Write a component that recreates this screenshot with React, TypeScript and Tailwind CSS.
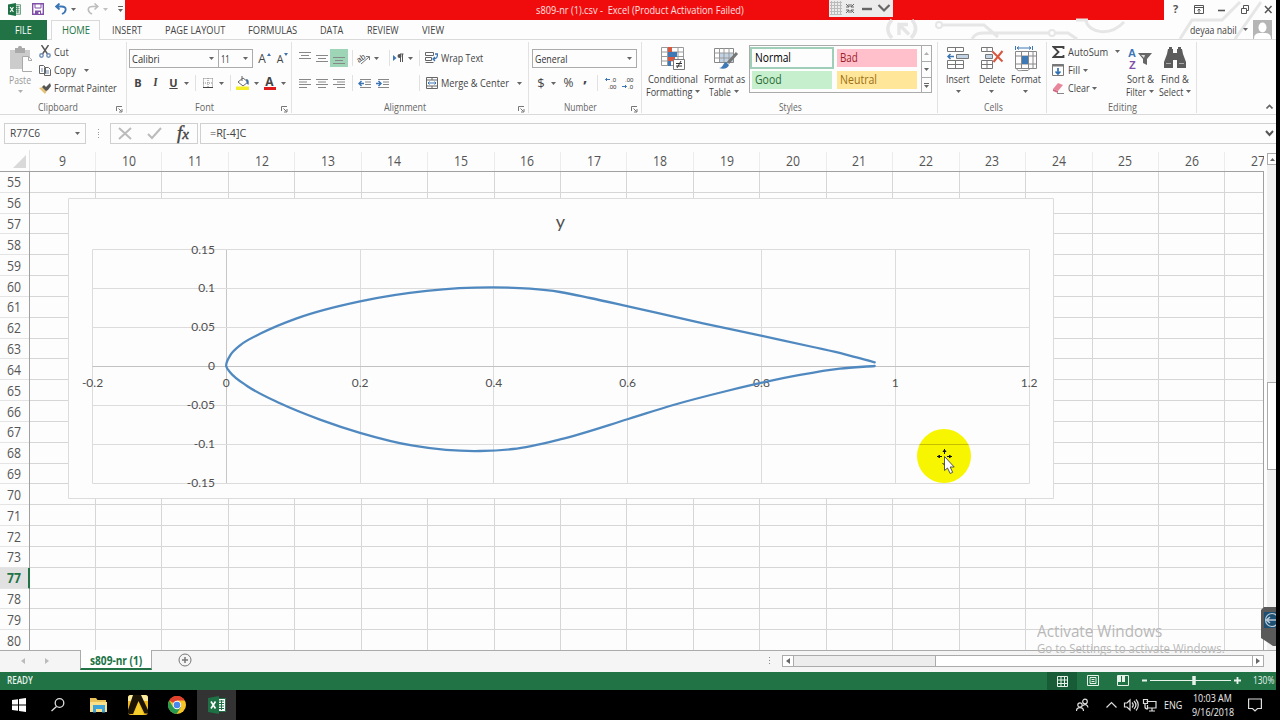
import { useLayoutEffect, useRef, useState } from "react";
import type { ReactNode } from "react";

/* Text set to a fixed width, whatever the metrics of the installed font */
function Label({ w, className = "", children }: { w: number; className?: string; children: string }) {
  const ref = useRef<HTMLSpanElement>(null);
  const [scale, setScale] = useState(1);

  useLayoutEffect(() => {
    if (ref.current) setScale(w / ref.current.offsetWidth);
  }, [w, children]);

  return (
    <span className={`block shrink-0 whitespace-pre ${className}`} style={{ width: w }}>
      <span ref={ref} className="inline-block origin-left" style={{ transform: `scaleX(${scale})` }}>
        {children}
      </span>
    </span>
  );
}

function Arrow({ className = "" }: { className?: string }) {
  return (
    <svg className={`shrink-0 ${className}`} width="5" height="3" viewBox="0 0 5 3">
      <path d="M0 0h5L2.5 3z" fill="#666" />
    </svg>
  );
}

/* A fixed-width, centred place in a toolbar row */
function Slot({ className, children }: { className: string; children?: ReactNode }) {
  return <div className={`flex h-[18px] shrink-0 items-center justify-center ${className}`}>{children}</div>;
}

function Sep() {
  return <div className="h-4 w-px shrink-0 bg-[#e1e1e1]" />;
}

function Group({ name, w, nameWidth, launcher = false, children }: { name: string; w: string; nameWidth: number; launcher?: boolean; children: ReactNode }) {
  return (
    <section className={`flex h-[71px] shrink-0 flex-col border-r border-[#e2e2e2] ${w}`}>
      <div className="flex h-[59px] items-start">{children}</div>
      <div className="flex h-3 items-center text-[#666]">
        <div className={`flex flex-1 justify-center ${launcher ? "" : "pl-3"}`}>
          <Label w={nameWidth}>{name}</Label>
        </div>
        <div className="w-[10px] pt-1">
          {launcher && (
            <svg width="7" height="7" viewBox="0 0 7 7" fill="none" stroke="#777">
              <path d="M.5 5V.5H6M2.5 2.5l3 3M6 3v3H3" />
            </svg>
          )}
        </div>
      </div>
    </section>
  );
}

function ExcelIcon({ size }: { size: number }) {
  return (
    <svg width={size} height={size} viewBox="0 0 18 18">
      <path d="M10 2.5h7.5v13H10z" fill="#fff" stroke="#217346" />
      <path d="M11 5h5M11 7.5h5M11 10h5M11 12.500h5M13.500 4v10" stroke="#217346" />
      <path d="M0 2l11-2v18L0 16z" fill="#1e7145" />
      <path d="M3 5.500l4.500 7M7.500 5.500l-4.500 7" stroke="#fff" strokeWidth="1.600" />
    </svg>
  );
}

function TitleBar() {
  return (
    <header className="flex h-5 items-start">
      <div className="flex h-[18px] w-[125px] shrink-0 items-center pl-2">
        <ExcelIcon size={13} />
        <svg className="ml-[11px]" width="12" height="12" viewBox="0 0 12 12">
          <path d="M.7.700h10.600v10.600H.700z" fill="#fff" stroke="#8050a8" strokeWidth="1.400" />
          <path d="M3 1h6v4H3z" fill="#fff" stroke="#8050a8" />
          <path d="M3 7.500h6V12H3z" fill="#8050a8" />
          <path d="M6.500 9h1.500v2H6.500z" fill="#fff" />
        </svg>
        <svg className="ml-[11px]" width="12" height="12" viewBox="0 0 12 12" fill="none" stroke="#3c76b5" strokeWidth="1.800">
          <path d="M4.500 .5L1.200 3.500l3.300 3M1.500 3.500H6.500c5.500 0 5.500 5 .5 7.500" />
        </svg>
        <Arrow className="ml-[4px]" />
        <svg className="ml-[11px]" width="12" height="12" viewBox="0 0 12 12" fill="none" stroke="#bdbdbd" strokeWidth="1.600">
          <path d="M7.500 .5l3.300 3-3.300 3M10.500 3.500H5.500c-5.500 0-5.500 5-.5 7.500" />
        </svg>
        <Arrow className="ml-[4px] opacity-40" />
        <svg className="ml-[10px]" width="5" height="6" viewBox="0 0 5 6">
          <path d="M0 0h5v1H0zM0 3h5L2.500 6z" fill="#666" />
        </svg>
      </div>
      <div className="flex h-5 w-[1039px] shrink-0 items-start bg-[#f00c0d]">
        <Label w={208} className="ml-[411px] mt-[2px] text-[10.5px] leading-4 text-[#ffe0e0]">
          s809-nr (1).csv -  Excel (Product Activation Failed)
        </Label>
        <div className="ml-[85px] flex h-[17px] w-16 items-center bg-[#ececec]">
          <svg width="64" height="17" viewBox="0 0 64 17" fill="none" stroke="#999">
            <path d="M2.500 1v14M5.500 1v14M8.500 1v14M11.500 1v14M1 2.500h12M1 5.500h12M1 8.500h12M1 11.500h12M1 14.500h12" stroke="#bbb" />
            <path d="M17 4l3 3m0-3v3h-3M25 4l-3 3m0-3v3h3M17 13l3-3m0 3v-3h-3M25 13l-3-3m0 3v-3h3" stroke="#666" />
            <path d="M33 9h10" stroke="#666" strokeWidth="2.400" />
            <path d="M49.500 5l5.500 5.500L60.500 5" stroke="#666" strokeWidth="2.200" />
          </svg>
        </div>
      </div>
      <div className="flex h-[18px] flex-1 items-center text-[#555]">
        <span className="ml-[9px] w-[6px] text-[11px] font-bold">?</span>
        <svg className="ml-[15px]" width="87" height="11" viewBox="1 0 87 11" fill="none" stroke="#555">
          <path d="M1.500 1.500h9v8h-9zM1.500 3.500h9M6 9V5M4.500 6.500L6 5l1.500 1.500" />
          <path d="M25 6.500h7" strokeWidth="1.600" />
          <path d="M48.500 4.500h5v5h-5zM50.500 4V1.500h5v5H54" />
          <path d="M72 2l6.500 7M78.500 2L72 9" strokeWidth="1.500" />
        </svg>
      </div>
    </header>
  );
}

const TABS = [
  { name: "INSERT", w: 30, box: "w-[52.5px]" },
  { name: "PAGE LAYOUT", w: 60, box: "w-[83.5px]" },
  { name: "FORMULAS", w: 49, box: "w-[72px]" },
  { name: "DATA", w: 23, box: "w-[46.5px]" },
  { name: "REVIEW", w: 32, box: "w-[55px]" },
  { name: "VIEW", w: 22, box: "w-[34px]" },
];

function TabBar() {
  return (
    <nav className="relative flex h-5 items-stretch border-b border-[#dadada] text-[11.5px] leading-5 text-[#444]">
      <svg className="absolute right-0 top-[-20px]" width="400" height="40" viewBox="876 0 400 40" fill="none" stroke="#e6e6e6" strokeWidth="3">
        <path d="M892 20c-6 6-5 13 0 18M911 38c6-6 6-12 1-18M899 35V24.500h9M899 24.500l10 10" strokeWidth="3.500" />
        <path d="M960 25h24l14 12M1076 20l12 0M972 39c3-5 6-6 12-6h65M1056 33h12l9 6M1086 21c3 12 24 16 38 1" />
        <circle cx="1260" cy="-5" r="3" strokeWidth="2" />
        <circle cx="1052" cy="33" r="3" strokeWidth="2" />
        <path d="M942 25h18" />
        <circle cx="939" cy="25" r="3" strokeWidth="2" />
        <path d="M1180 39l12-19h30l18-18M1235 39l26-37" />
      </svg>
      <div className="flex h-5 w-[47px] shrink-0 justify-center bg-[#217346] text-white">
        <Label w={17}>FILE</Label>
      </div>
      <div className="ml-1 mr-[12px] flex h-5 w-[49px] shrink-0 justify-center border border-b-0 border-[#dadada] bg-[#fdfdfd] leading-[18px] text-[#217346]">
        <Label w={28}>HOME</Label>
      </div>
      {TABS.map((t) => (
        <div key={t.name} className={`shrink-0 ${t.box}`}>
          <Label w={t.w}>{t.name}</Label>
        </div>
      ))}
      <div className="relative ml-auto flex items-center pr-1 text-[11px]">
        <Label w={47}>deyaa nabil</Label>
        <Arrow className="ml-[6px]" />
        <svg className="ml-[5px]" width="19" height="19" viewBox="0 0 19 19">
          <path d="M0 0h19v19H0z" fill="#b5b5b5" />
          <ellipse cx="9.500" cy="7.500" rx="4" ry="5" fill="#fff" />
          <path d="M1 19c0-6 4-6 8.500-6s8.500 0 8.500 6z" fill="#fff" />
        </svg>
      </div>
    </nav>
  );
}

function Lines({ d }: { d: string }) {
  return (
    <svg width="12" height="11" viewBox="0 0 12 11" stroke="#888" fill="none">
      <path d={d} />
    </svg>
  );
}

function Clipboard() {
  return (
    <Group name="Clipboard" w="w-[127px]" nameWidth={40} launcher>
      <div className="ml-2 flex w-6 flex-col items-center pt-1 text-[#999]">
        <svg width="24" height="26" viewBox="0 0 24 26">
          <path d="M2 4h20v19H2z" fill="#ccc" />
          <path d="M7 2h3c0-3 4-3 4 0h3v5H7z" fill="#aaa" />
          <path d="M14.500 10.500h6l4 4v11h-10z" fill="#fdfdfd" stroke="#aaa" />
          <path d="M20.500 10.500v4h4" fill="none" stroke="#aaa" />
        </svg>
        <Label w={22} className="leading-[15px]">Paste</Label>
        <Arrow className="mt-[3px] opacity-50" />
      </div>
      <div className="ml-[7px] flex flex-col">
        <div className="flex h-[19px] items-center">
          <svg className="mr-[3px]" width="12" height="13" viewBox="0 0 12 13" fill="none" stroke="#555" strokeWidth="1.400">
            <path d="M2.500 0l6 9M9.500 0l-6 9" />
            <circle cx="2.500" cy="10.500" r="1.700" stroke="#6f8fb5" />
            <circle cx="9.500" cy="10.500" r="1.700" stroke="#6f8fb5" />
          </svg>
          <Label w={15}>Cut</Label>
        </div>
        <div className="flex h-[18px] items-center">
          <svg className="mr-[3px]" width="12" height="11" viewBox="0 0 12 11" fill="#fff" stroke="#666">
            <path d="M.5.500h4l2 2v6h-6zM5.500 2.500h4l2 2v6h-6z" />
            <path d="M2 4h2M2 6h2M7 6h3M7 8h3" stroke="#6f8fb5" />
          </svg>
          <Label w={22}>Copy</Label>
          <Arrow className="ml-2" />
        </div>
        <div className="flex h-[18px] items-center">
          <svg className="mr-[3px]" width="12" height="11" viewBox="0 0 12 11">
            <path d="M0 5l4-1 4 4-2 3z" fill="#e5c27a" />
            <path d="M5 2l2 2 4-4 1 3-3 4-2 1-4-4z" fill="#555" />
          </svg>
          <Label w={63}>Format Painter</Label>
        </div>
      </div>
    </Group>
  );
}

function FontGroup() {
  return (
    <Group name="Font" w="w-[165px]" nameWidth={19} launcher>
      <div className="ml-[2px] pt-[7px]">
        <div className="flex h-[19px] items-center">
          <div className="flex h-[19px] w-[90px] items-center justify-between border border-[#ababab] pl-[2px] pr-1 text-[#333]">
            <Label w={28}>Calibri</Label>
            <Arrow />
          </div>
          <div className="flex h-[19px] w-[34px] items-center justify-between border border-l-0 border-[#ababab] pl-[2px] pr-1 text-[#333]">
            <Label w={9}>11</Label>
            <Arrow />
          </div>
          <Slot className="ml-[4px] w-[10px] text-[12px]">A</Slot>
          <svg className="-mt-2 mr-[5px]" width="4" height="3"><path d="M0 3L2 0l2 3z" fill="#4472a8" /></svg>
          <Slot className="w-[8px] text-[10.5px]">A</Slot>
          <svg className="-mt-2" width="4" height="3"><path d="M0 0h4L2 3z" fill="#4472a8" /></svg>
        </div>
        <div className="mt-[6px] flex h-[18px] items-center text-[11px]">
          <Slot className="w-[18px] font-bold">B</Slot>
          <Slot className="w-[17px] font-serif font-bold italic">I</Slot>
          <Slot className="w-[19px] font-bold underline">U</Slot>
          <Slot className="w-[7px]"><Arrow /></Slot>
          <Slot className="w-[11px]"><Sep /></Slot>
          <Slot className="w-[14px]">
            <svg width="10" height="10" viewBox="0 0 10 10" fill="none" stroke="#888">
              <path d="M.5.500h9M.5.500v9M9.500.500v9M5 0v10M0 5h10" strokeDasharray="1 1" />
              <path d="M0 9.500h10" stroke="#444" />
            </svg>
          </Slot>
          <Slot className="w-[12px]"><Arrow /></Slot>
          <Slot className="w-[6px]"><Sep /></Slot>
          <Slot className="w-[19px]">
            <svg width="14" height="14" viewBox="0 0 14 14">
              <path d="M2 6l5-4 5 4-5 4z" fill="#fff" stroke="#666" />
              <path d="M6 5V0" stroke="#666" />
              <path d="M10 3c3 0 3 3 2.500 6-2-1-2-3-2.500-6z" fill="#3c6ea5" />
              <path d="M0 10.500h13V14H0z" fill="#f3ee27" />
            </svg>
          </Slot>
          <Slot className="w-[8px]"><Arrow /></Slot>
          <Slot className="w-[19px] pt-px text-[12px] font-bold">
            <div className="flex w-[12px] flex-col items-center border-b-[3px] border-[#e01b1b] leading-[10px]">A</div>
          </Slot>
          <Slot className="w-[9px]"><Arrow /></Slot>
        </div>
      </div>
    </Group>
  );
}

function Alignment() {
  return (
    <Group name="Alignment" w="w-[237px]" nameWidth={42} launcher>
      <div className="ml-[4px] pt-[7px]">
        <div className="flex h-[18px] items-center">
          <Slot className="w-[17px] pb-[4px]"><Lines d="M0 1.500h12M2 4.500h8M0 7.500h12" /></Slot>
          <Slot className="w-[17px]"><Lines d="M0 2.500h12M2 5.500h8M0 8.500h12" /></Slot>
          <Slot className="w-[18px] bg-[#9fd5b7] pt-[2px]"><Lines d="M0 3.500h12M2 6.500h8M0 9.500h12" /></Slot>
          <Slot className="w-[8px]"><Sep /></Slot>
          <Slot className="w-[16px]">
            <svg className="overflow-visible font-['Liberation_Sans',sans-serif]" width="14" height="13" viewBox="0 0 14 13">
              <text x="0" y="9" fontSize="8" fill="#444" transform="rotate(-35 4 7)">ab</text>
              <path d="M4 12l8-7M12.500 8V4.500H9" stroke="#777" fill="none" />
            </svg>
          </Slot>
          <Slot className="w-[9px]"><Arrow /></Slot>
          <Slot className="w-[6px]" />
          <Slot className="w-[5px]"><Sep /></Slot>
          <Slot className="w-[12px]">
            <svg width="11" height="10" viewBox="0 0 11 10">
              <path d="M0 2l3.500 3L0 8z" fill="#3c76b5" />
              <path d="M7.500 1v8M9.500 1v8M10.500 1H7" stroke="#555" fill="none" />
              <circle cx="6.500" cy="3" r="2" fill="#555" />
            </svg>
          </Slot>
          <Slot className="w-[13px]"><Arrow /></Slot>
          <Slot className="w-[5px]"><Sep /></Slot>
          <Slot className="w-[19px]">
            <svg width="13" height="14" viewBox="0 0 13 14" fill="none" stroke="#666">
              <path d="M.5 1.500h8v3h-8zM.5 6.500h6v3h-6zM.5 11.500h8" />
              <path d="M10 3h2.500c0 4-1 5-4 5M10 6L8 8l2 2" stroke="#3c76b5" strokeWidth="1.300" />
            </svg>
          </Slot>
          <Label w={42}>Wrap Text</Label>
        </div>
        <div className="mt-[7px] flex h-[18px] items-center">
          <Slot className="w-[17px]"><Lines d="M0 1.500h12M0 4h8M0 6.500h12M0 9.500h8" /></Slot>
          <Slot className="w-[17px]"><Lines d="M0 1.500h12M2 4h8M0 6.500h12M2 9.500h8" /></Slot>
          <Slot className="w-[18px]"><Lines d="M0 1.500h12M4 4h8M0 6.500h12M4 9.500h8" /></Slot>
          <Slot className="w-[8px]"><Sep /></Slot>
          <Slot className="w-[16px]">
            <svg width="13" height="9" viewBox="0 0 13 9" fill="none" stroke="#888">
              <path d="M2 .500h11M7 3h6M7 5.500h6M2 8.500h11" />
              <path d="M6 4.500H1M3.500 2L1 4.500 3.500 7" stroke="#3c76b5" strokeWidth="1.500" />
            </svg>
          </Slot>
          <Slot className="w-[20px]">
            <svg width="13" height="9" viewBox="0 0 13 9" fill="none" stroke="#888">
              <path d="M2 .500h11M7 3h6M7 5.500h6M2 8.500h11" />
              <path d="M0 4.500h5M2.500 2L5 4.500 2.500 7" stroke="#3c76b5" strokeWidth="1.500" />
            </svg>
          </Slot>
          <Slot className="w-[25px]" />
          <Slot className="w-[5px]"><Sep /></Slot>
          <Slot className="w-[19px]">
            <svg width="12" height="12" viewBox="0 0 12 12" fill="none" stroke="#666">
              <path d="M.5.500h11v11H.500zM.5 3h11M.5 9h11M6 0v3M6 9v3" />
              <path d="M2 6h8M3.500 4.500L2 6l1.500 1.500M8.500 4.500L10 6 8.500 7.500" stroke="#3c76b5" />
            </svg>
          </Slot>
          <Label w={68}>{"Merge & Center"}</Label>
          <Arrow className="ml-2" />
        </div>
      </div>
    </Group>
  );
}

function NumberGroup() {
  return (
    <Group name="Number" w="w-[113px]" nameWidth={33} launcher>
      <div className="ml-[3px] pt-[7px]">
        <div className="flex h-[19px] w-[105px] items-center justify-between border border-[#ababab] pl-[2px] pr-1 text-[#333]">
          <Label w={32}>General</Label>
          <Arrow />
        </div>
        <div className="mt-[6px] flex h-[18px] items-center text-[12px]">
          <Slot className="w-[18px] text-[13px]">$</Slot>
          <Slot className="w-[7px]"><Arrow /></Slot>
          <Slot className="w-[23px]">%</Slot>
          <Slot className="w-[10px] pt-1 text-[15px] font-bold">’</Slot>
          <Slot className="w-[15px]"><Sep /></Slot>
          <Slot className="w-[11px]">
            <svg className="overflow-visible font-['Liberation_Sans',sans-serif]" width="12" height="12" viewBox="0 0 12 12" fontSize="6" fill="#333">
              <text x="6" y="4.500">.0</text>
              <text x="3" y="11.500">.00</text>
              <path d="M5 2.500H.500M2 1L.500 2.500 2 4" stroke="#3c76b5" fill="none" />
            </svg>
          </Slot>
          <Slot className="ml-[6px] w-[12px]">
            <svg className="overflow-visible font-['Liberation_Sans',sans-serif]" width="12" height="12" viewBox="0 0 12 12" fontSize="6" fill="#333">
              <text x="3" y="4.500">.00</text>
              <text x="6" y="11.500">.0</text>
              <path d="M0 9.500h4.500M3 8l1.500 1.500L3 11" stroke="#3c76b5" fill="none" />
            </svg>
          </Slot>
        </div>
      </div>
    </Group>
  );
}

function BigButton({ w, icon, line1, w1, line2, w2 = 0 }: { w: string; icon: ReactNode; line1: string; w1: number; line2?: string; w2?: number }) {
  return (
    <div className={`flex shrink-0 flex-col items-center pt-[4px] leading-[13px] ${w}`}>
      <div className="flex h-[27px] items-start">{icon}</div>
      <Label w={w1} className="-mt-px">{line1}</Label>
      <div className="flex h-[13px] items-center gap-[3px]">
        {line2 && <Label w={w2}>{line2}</Label>}
        <Arrow />
      </div>
    </div>
  );
}

function Styles() {
  return (
    <Group name="Styles" w="w-[296px]" nameWidth={23}>
      <BigButton
        w="ml-[3px] w-[56px]"
        line1="Conditional"
        w1={50}
        line2="Formatting"
        w2={46}
        icon={
          <svg width="24" height="24" viewBox="0 0 24 24" fill="none">
            <path d="M.5 1.500h22v18H.500zM.5 6h22M.5 10.500h22M.5 15h22M6.500 1v18M17 1v18" stroke="#999" fill="#fff" />
            <path d="M7 1h4v5H7zM7 11h7v4H7z" fill="#d9573f" />
            <path d="M7 6h9v5H7zM7 15h3v5H7z" fill="#3f79b5" />
            <path d="M12.500 13.500h11v10h-11z" fill="#fff" stroke="#777" />
            <path d="M15 17.500h6M15 20h6M20 15l-4 7" stroke="#333" />
          </svg>
        }
      />
      <BigButton
        w="ml-px w-[44px]"
        line1="Format as"
        w1={41}
        line2="Table"
        w2={22}
        icon={
          <svg className="ml-1" width="25" height="24" viewBox="0 0 25 24" fill="none">
            <path d="M.5 2.500h19v14H.500z" fill="#fff" stroke="#888" />
            <path d="M6 7h13v9H6z" fill="#c3d3e6" />
            <path d="M.5 7h19M.5 12h19M5.500 2v14M10 2v14M15 2v14" stroke="#999" />
            <path d="M23 7l-9 10" stroke="#777" strokeWidth="3" />
            <path d="M5 22c4 0 4-5 7-6l3 3c-1 3-5 5-10 3z" fill="#3f79b5" />
          </svg>
        }
      />
      <div className="ml-[3px] mt-[3px] flex h-12 w-[183px] border border-[#ababab] bg-[#fdfdfd] text-[12px]">
        <div className="grid w-[171px] grid-cols-[84px_80px] grid-rows-[22px_18px] gap-x-[3px] gap-y-[2px] pt-px">
          <div className="flex items-center border-2 border-[#9fcfb8] pl-[3px] text-black"><Label w={36}>Normal</Label></div>
          <div className="mb-[2px] mt-[2px] flex items-center bg-[#ffc0cb] pl-[3px] text-[#9c1c28]"><Label w={18}>Bad</Label></div>
          <div className="ml-[2px] mr-[2px] flex items-center bg-[#c6efce] pl-[3px] text-[#2a6b34]"><Label w={27}>Good</Label></div>
          <div className="flex items-center bg-[#ffe699] pl-[3px] text-[#9c6f14]"><Label w={37}>Neutral</Label></div>
        </div>
        <div className="flex w-[10px] flex-col border-l border-[#ababab]">
          <div className="flex h-4 items-center justify-center border-b border-[#ababab]"><Arrow className="rotate-180 opacity-50" /></div>
          <div className="flex h-4 items-center justify-center border-b border-[#ababab]"><Arrow /></div>
          <div className="flex flex-1 flex-col items-center justify-center gap-px">
            <div className="h-px w-[5px] bg-[#666]" />
            <Arrow />
          </div>
        </div>
      </div>
    </Group>
  );
}

function Cells() {
  return (
    <Group name="Cells" w="w-[109px]" nameWidth={19}>
      <BigButton
        w="ml-[4px] w-[32px]"
        line1="Insert"
        w1={24}
        icon={
          <svg width="24" height="24" viewBox="0 0 24 24" fill="#fff" stroke="#777">
            <path d="M1.500 1.500h16v4h-16zM9.500 1v4M1.500 14.500h16v8h-16zM1.500 18.500h16M9.500 14v8" />
            <path d="M10.500 8.500h12v4h-12z" fill="#c3d3e6" />
            <path d="M8 10.500H2M4.500 8L2 10.500 4.500 13" stroke="#3c76b5" strokeWidth="1.500" fill="none" />
          </svg>
        }
      />
      <BigButton
        w="w-[35px]"
        line1="Delete"
        w1={26}
        icon={
          <svg width="24" height="24" viewBox="0 0 24 24" fill="#fff" stroke="#777">
            <path d="M1.500 1.500h11v4h-11zM7 1v4M1.500 14.500h11v8h-11zM1.500 18.500h11M7 14v8" />
            <path d="M5.500 8.500h7v4h-7z" fill="#c3d3e6" />
            <path d="M12.500 5.500l10 10M22.500 5l-9 11" stroke="#d9573f" strokeWidth="2" fill="none" />
          </svg>
        }
      />
      <BigButton
        w="w-[33px]"
        line1="Format"
        w1={30}
        icon={
          <svg width="24" height="26" viewBox="0 0 24 26" fill="none" stroke="#888">
            <path d="M1.500 5.500h21v17h-21zM1.500 10h21M1.500 18h21M7.500 6v16M14.500 6v16M19 6v16" />
            <path d="M8 10h6v8H8z" fill="#3f79b5" stroke="none" />
            <path d="M1.500 0v4M18.500 0v4M3 2h14M5 .500L3 2l2 1.500M15 .500L17 2l-2 1.500" stroke="#3c76b5" />
            <path d="M3 22.500c0 3 3 2 5 2h6l2-2" stroke="#888" />
          </svg>
        }
      />
    </Group>
  );
}

function Editing() {
  return (
    <Group name="Editing" w="w-[150px]" nameWidth={29}>
      <div className="ml-[5px] flex flex-col">
        <div className="flex h-[19px] items-center">
          <svg className="mr-[3px]" width="13" height="12" viewBox="0 0 13 12">
            <path d="M11.500 3V1H1.500l5 5-5 5h10V9" fill="none" stroke="#444" strokeWidth="1.800" />
          </svg>
          <Label w={40}>AutoSum</Label>
          <Arrow className="ml-[7px]" />
        </div>
        <div className="flex h-[18px] items-center">
          <svg className="mr-[4px]" width="12" height="12" viewBox="0 0 12 12" fill="none" stroke="#777">
            <path d="M.5.500h11v11H.500z" />
            <path d="M0 1.500h12" strokeWidth="2" />
            <path d="M6 4v6M3.500 7.500L6 10l2.500-2.500" stroke="#2f6fb5" strokeWidth="1.700" />
          </svg>
          <Label w={12}>Fill</Label>
          <Arrow className="ml-[3px]" />
        </div>
        <div className="flex h-[18px] items-center">
          <svg className="mr-[4px]" width="12" height="12" viewBox="0 0 12 12">
            <path d="M1 7l5-6 5 2-5 6z" fill="#e8879c" />
            <path d="M1 7l5 2v2L1 9z" fill="#cf6680" />
            <path d="M5 11.500h7" stroke="#888" />
          </svg>
          <Label w={22}>Clear</Label>
          <Arrow className="ml-[2px]" />
        </div>
      </div>
      <BigButton
        w="ml-[3px] w-[34px]"
        line1="Sort &"
        w1={27}
        line2="Filter"
        w2={20}
        icon={
          <svg className="overflow-visible font-['Liberation_Sans',sans-serif]" width="24" height="24" viewBox="0 0 24 24" fontWeight="bold" fontSize="11">
            <text x="0" y="11" fill="#3c76b5">A</text>
            <text x="1" y="22.500" fill="#8050a8">Z</text>
            <path d="M10 7h14l-5 6v6l-4-2v-4z" fill="#666" />
            <path d="M13 9h4l-1 3z" fill="#ddd" />
          </svg>
        }
      />
      <BigButton
        w="w-[35px]"
        line1="Find &"
        w1={28}
        line2="Select"
        w2={24}
        icon={
          <svg width="22" height="23" viewBox="0 0 22 23" fill="#5c5c5c">
            <path d="M4 3h5v4h4V3h5l1 5 3 8v6h-9v-8H9v8H0v-6l3-8zM5 1h3v2H5zM14 1h3v2h-3z" />
            <path d="M2 17h5v1H2zM15 17h5v1h-5z" fill="#aaa" />
          </svg>
        }
      />
    </Group>
  );
}

function Ribbon() {
  return (
    <div className="flex h-[75px] items-start border-b border-[#dadada] pt-[2px] text-[11px] leading-4 text-[#444]">
      <Clipboard />
      <FontGroup />
      <Alignment />
      <NumberGroup />
      <Styles />
      <Cells />
      <Editing />
      <div className="flex h-[71px] flex-1 items-end justify-end pb-1 pr-[3px]">
        <svg width="7" height="5" viewBox="0 0 7 5" fill="none" stroke="#666" strokeWidth="1.600">
          <path d="M.5 4.500l3-3 3 3" />
        </svg>
      </div>
    </div>
  );
}

function FormulaBar() {
  return (
    <div className="flex h-[35px] items-start pt-2 text-[10.5px] text-[#444]">
      <div className="ml-1 flex h-[21px] w-[82px] items-center justify-between border border-[#d0d0d0] pl-[5px] pr-[5px]">
        <Label w={30}>R77C6</Label>
        <Arrow />
      </div>
      <div className="flex h-[21px] w-[24px] flex-col items-center justify-center gap-[1.5px]">
        <i className="size-[1px] bg-[#999]" />
        <i className="size-[1px] bg-[#999]" />
        <i className="size-[1px] bg-[#999]" />
        <i className="size-[1px] bg-[#999]" />
      </div>
      <div className="flex h-[21px] w-[88px] items-center border border-[#d0d0d0] pl-[7px]">
        <svg width="45" height="13" viewBox="0 0 45 13" fill="none" stroke="#bbb" strokeWidth="2">
          <path d="M1 1l12 11M13 1L1 12M30 7l4 4L43 1" />
        </svg>
        <span className="ml-[14px] font-['Liberation_Serif',serif] text-[19px] italic leading-4 text-[#444] [-webkit-text-stroke:0.4px_#444]">
          f<span className="text-[15px]">x</span>
        </span>
      </div>
      <div className="ml-[2px] flex h-[21px] flex-1 items-center justify-between border border-r-0 border-[#d0d0d0] pl-[9px] pr-[2px]">
        <Label w={36}>=R[-4]C</Label>
        <svg width="9" height="7" viewBox="0 0 9 7" fill="none" stroke="#555" strokeWidth="2">
          <path d="M1 1l3.500 4L8 1" />
        </svg>
      </div>
    </div>
  );
}

const COLUMNS = Array.from({ length: 19 }, (_, i) => i + 9);
const ROWS = [...Array.from({ length: 19 }, (_, i) => i + 55), 77, 78, 79, 80];

// Blade section outline, from the upper trailing edge round the nose to the lower one
const OUTLINE = [
  [874.7, 362.3], [845, 354.3], [813, 347], [762, 335.8], [700, 322.6], [628, 306.4], [590, 298], [560, 292], [530, 288.7], [494, 287.4],
  [426.7, 290.8], [360, 301.3], [296.7, 318.3], [260, 333.8], [240, 345.3], [230.5, 354.8], [226.3, 366.5],
  [230.7, 372.9], [246.7, 385.7], [280, 403.3], [320, 419.6], [360, 432.8], [413.3, 445.7], [446, 449.9], [480, 451],
  [513, 449], [560, 439.4], [628.3, 419], [673.3, 405], [726.7, 391], [762, 382.7], [800, 374.9], [840, 368.6], [874.7, 366],
];

/* Catmull-Rom through the points, weighted for their uneven spacing */
function smooth(p: number[][]) {
  const dist = (a: number[], b: number[]) => Math.hypot(b[0] - a[0], b[1] - a[1]);
  const slope = (i: number) => {
    const a = p[i - 1];
    const b = p[i];
    const c = p[i + 1];
    if (!a) return [0, 1].map((k) => (c[k] - b[k]) / dist(b, c));
    if (!c) return [0, 1].map((k) => (b[k] - a[k]) / dist(a, b));
    const h0 = dist(a, b);
    const h1 = dist(b, c);
    return [0, 1].map((k) => (((b[k] - a[k]) / h0) * h1 + ((c[k] - b[k]) / h1) * h0) / (h0 + h1));
  };
  let d = `M${p[0][0]} ${p[0][1]}`;
  for (let i = 0; i < p.length - 1; i++) {
    const b = p[i];
    const c = p[i + 1];
    const l = dist(b, c) / 3;
    const s = slope(i);
    const e = slope(i + 1);
    d += `C${b[0] + s[0] * l} ${b[1] + s[1] * l} ${c[0] - e[0] * l} ${c[1] - e[1] * l} ${c[0]} ${c[1]}`;
  }
  return d;
}

function Chart() {
  const xs = ["-0.2", "0", "0.2", "0.4", "0.6", "0.8", "1", "1.2"];
  const ys = ["0.15", "0.1", "0.05", "0", "-0.05", "-0.1", "-0.15"];
  return (
    <svg className="absolute left-[68px] top-[48px] font-['Lato',sans-serif]" width="986" height="302" viewBox="68 198 986 302">
      <path d="M68.500 198.500h985v300h-985z" fill="#fdfdfd" stroke="#dcdcdc" />
      <g>
        {xs.map((x, i) => (
          <path key={x} d={`M${92.5 + Math.round(i * 133.8)} 249.500V483.500`} stroke={i === 1 ? "#c6c6c6" : "#dcdcdc"} />
        ))}
        {ys.map((y, i) => (
          <path key={y} d={`M92.500 ${249.5 + Math.round(i * 39)}H1029.500`} stroke={i === 3 ? "#c2c2c2" : "#dcdcdc"} />
        ))}
      </g>
      <g fontSize="12" fill="#505050">
        {ys.map((y, i) => (
          <text key={y} x="215" y={253.5 + i * 38.9} textAnchor="end">{y}</text>
        ))}
        {xs.map((x, i) => (
          <text key={x} x={92.5 + i * 133.8} y="386.500" textAnchor="middle">{x}</text>
        ))}
        <text x="560.500" y="228" fontSize="18" textAnchor="middle">y</text>
      </g>
      <path d={smooth(OUTLINE)} fill="none" stroke="#5089c0" strokeWidth="2.300" strokeLinecap="round" />
    </svg>
  );
}

function Pointer() {
  return (
    <svg className="absolute left-[916px] top-[278px]" width="56" height="56" viewBox="916 428 56 56">
      <circle cx="944" cy="456" r="27" fill="#f7f500" />
      <path d="M919.500 444.500h49" stroke="#b5b000" strokeWidth=".8" />
      <path d="M944.500 449v5M943 451.500l1.500-1.500 1.500 1.500zM937 456.500h5M939.500 455l-1.500 1.500 1.500 1.500zM947 456.500h5M949.500 455l1.500 1.500-1.500 1.500zM942.500 463l2 2" stroke="#111" fill="#111" />
      <path d="M944.500 456.500v14l3-2.500 2.700 5.500 2.500-1.200-2.500-5.300h4z" fill="#fff" stroke="#444" strokeWidth=".9" />
    </svg>
  );
}

function Sheet() {
  return (
    <main className="relative flex h-[500px] overflow-hidden text-[#555]">
      <div className="flex w-[1264px] shrink-0 flex-col">
        <div className="flex h-[22px] border-b border-[#a0a0a0] text-[14px] leading-[17px]">
          <div className="flex h-[21px] w-[29.5px] shrink-0 items-end justify-end border-r border-[#e3e3e3] pb-[3px] pr-[3px]">
            <svg width="13" height="13"><path d="M13 0v13H0z" fill="#d9d9d9" /></svg>
          </div>
          <div className="flex min-w-0 flex-1 overflow-hidden">
            {COLUMNS.map((c) => (
              <div key={c} className="mt-[2px] flex h-[19px] w-[66.45px] shrink-0 justify-center border-r border-[#ececec]">
                <Label w={c < 10 ? 7 : 14}>{String(c)}</Label>
              </div>
            ))}
          </div>
        </div>
        <div className="flex h-[479px]">
          <div className="flex w-[29.5px] shrink-0 flex-col border-r border-[#a0a0a0] text-[14px]">
            {ROWS.map((r) => (
              <div key={r} className={`flex h-[20.83px] shrink-0 items-center justify-center border-b border-[#e4e4e4] ${r === 77 ? "-mr-px border-r-2 border-r-[#217346] bg-[#e1e1e1] font-bold text-[#217346]" : ""}`}>
                <Label w={14}>{String(r)}</Label>
              </div>
            ))}
          </div>
          <div className="flex-1 overflow-hidden border-r border-[#a0a0a0]">
            {ROWS.map((r) => (
              <div key={r} className="flex h-[20.83px] border-b border-[#d6d6d6]">
                {COLUMNS.map((c) => (
                  <div key={c} className="w-[66.45px] shrink-0 border-r border-[#d6d6d6]" />
                ))}
              </div>
            ))}
          </div>
        </div>
      </div>
      <div className="ml-[3px] flex w-[9px] shrink-0 flex-col bg-[#f1f1f1]">
        <div className="h-[3px] bg-[#fdfdfd]" />
        <div className="flex h-[12px] items-center justify-center border border-r-0 border-[#ababab] bg-white"><Arrow className="rotate-180" /></div>
        <div className="mt-[217px] h-[88px] border border-r-0 border-[#ababab] bg-white" />
      </div>
      <Chart />
      <Pointer />
      <svg className="absolute left-[1261px] top-[457px]" width="15" height="40" viewBox="0 0 15 40">
        <path d="M0 3l3-3h12v39H12L0 31z" fill="#5a5a5a" />
        <path d="M3 5h12v16H3z" fill="#1d4f73" />
        <circle cx="11" cy="13" r="6.500" fill="none" stroke="#b8cad6" strokeWidth="1.200" />
        <path d="M6 13h9M9 10l-3.500 3L9 16" fill="none" stroke="#b8cad6" strokeWidth="1.600" />
      </svg>
    </main>
  );
}

function SheetTabs() {
  return (
    <div className="flex h-[22px] items-start border-t border-[#ababab] bg-[#f5f5f5]">
      <div className="flex h-5 w-[80px] shrink-0 items-center gap-[20px] pl-[21px]">
        <svg width="4" height="6"><path d="M4 0v6L0 3z" fill="#bbb" /></svg>
        <svg width="4" height="6"><path d="M0 0v6l4-3z" fill="#bbb" /></svg>
      </div>
      <div className="-mt-px flex h-[20px] w-[72px] shrink-0 items-center justify-center border-x border-b-2 border-x-[#ababab] border-b-[#217346] bg-white pt-[3px] text-[11.5px] font-bold leading-4 text-[#217346]">
        <Label w={52}>s809-nr (1)</Label>
      </div>
      <svg className="ml-[26px] mt-[2px]" width="14" height="14" viewBox="0 0 14 14" fill="none" stroke="#777">
        <circle cx="7" cy="7" r="6" />
        <path d="M7 4v6M4 7h6" strokeWidth="1.500" />
      </svg>
      <div className="ml-auto mt-[6px] flex flex-col gap-[2px]">
        <i className="size-[1px] bg-[#888]" />
        <i className="size-[1px] bg-[#888]" />
        <i className="size-[1px] bg-[#888]" />
      </div>
      <div className="ml-[12px] mr-[12px] mt-[4px] flex h-3 w-[482px] border border-[#ababab] bg-[#ededed]">
        <div className="flex w-[11px] items-center justify-center border-r border-[#ababab] bg-white">
          <svg width="4" height="6"><path d="M4 0v6L0 3z" fill="#666" /></svg>
        </div>
        <div className="ml-auto w-[318px] border-x border-[#ababab] bg-white" />
        <div className="flex w-[10px] items-center justify-center bg-white">
          <svg width="4" height="6"><path d="M0 0v6l4-3z" fill="#666" /></svg>
        </div>
      </div>
    </div>
  );
}

function StatusBar() {
  return (
    <div className="flex h-[18px] items-center bg-[#217346] pb-px text-[10px] text-[#e6f2ea]">
      <Label w={26} className="ml-[7px] font-semibold">READY</Label>
      <div className="-mb-px ml-auto flex h-[18px] w-[30px] items-center justify-center bg-[#185c37]">
        <svg width="11" height="11" viewBox="0 0 11 11" fill="none" stroke="#e6f2ea">
          <path d="M.5.500h10v10H.500zM.5 4h10M.5 7.500h10M4 0v11M7.500 0v11" />
        </svg>
      </div>
      <svg className="ml-[10px]" width="12" height="11" viewBox="0 0 12 11" fill="none" stroke="#e6f2ea">
        <path d="M.5.500h11v10H.500zM3 2.500h6v6H3zM4.500 4.500h3M4.500 6.500h3" />
      </svg>
      <svg className="ml-[18px]" width="12" height="11" viewBox="0 0 12 11" fill="none" stroke="#e6f2ea">
        <path d="M.5.500h11v10H.500z" />
        <path d="M1 1h3v6H1zM5 1h3v6H5z" fill="#e6f2ea" stroke="none" />
      </svg>
      <svg className="ml-[13px]" width="100" height="11" viewBox="0 0 100 11" stroke="#e6f2ea">
        <path d="M0 5.500h5M92 5.500h7M95.500 2v7" strokeWidth="1.800" />
        <path d="M8 5.500h81" />
        <path d="M52 1v9" strokeWidth="3.500" />
      </svg>
      <Label w={21} className="ml-[11px] mr-[2px]">130%</Label>
    </div>
  );
}

function Taskbar() {
  return (
    <footer className="flex h-[30px] items-center bg-black text-[11px] text-[#eee]">
      <svg className="ml-[12px]" width="14" height="14" viewBox="0 0 14 14" fill="#fff">
        <path d="M0 2l6-.8v5.300H0zM7 1l7-1v6.500H7zM0 7.500h6v5.300L0 12zM7 7.500h7V14l-7-1z" />
      </svg>
      <svg className="ml-[25px]" width="14" height="14" viewBox="0 0 14 14" fill="none" stroke="#ddd" strokeWidth="1.300">
        <circle cx="8.500" cy="5" r="4.300" />
        <path d="M5.500 8.500L.500 13" />
      </svg>
      <svg className="ml-[25px]" width="17" height="16" viewBox="0 0 17 16">
        <path d="M0 1h6l1.500 2H16v12H0z" fill="#e9c35a" />
        <path d="M0 5h17v10H0z" fill="#fbe08a" />
        <path d="M3 8h12v7.500h-3V12H6v3.500H3z" fill="#3ea2dc" />
      </svg>
      <svg className="ml-[21px]" width="20" height="20" viewBox="0 0 20 20">
        <rect width="20" height="20" rx="3" fill="#f0b91e" />
        <path d="M0 3c0-2 1-3 3-3h14c2 0 3 1 3 3v3H0z" fill="#faec9e" />
        <path d="M5 0h3.500L4 18.500H0V15zM8.500 0H13l7 15v3.500h-3.500L10.500 6 5 19H1z" fill="#1b1405" />
        <path d="M10.500 7l5 13h-10z" fill="#f6cf2d" />
      </svg>
      <svg className="ml-[20px]" width="18" height="18" viewBox="0 0 18 18">
        <circle cx="9" cy="9" r="9" fill="#f7c325" />
        <path d="M9 9L1.200 4.500A9 9 0 0 1 16.800 4.500H9z" fill="#e2402f" />
        <path d="M9 9l-3.900 2.200L1.200 4.500A9 9 0 0 0 8.500 18l4.400-6.800z" fill="#269a51" />
        <circle cx="9" cy="9" r="4.200" fill="#fff" />
        <circle cx="9" cy="9" r="3.300" fill="#4a88ee" />
      </svg>
      <div className="ml-[11px] flex h-full w-[39px] items-center justify-center bg-[#333]">
        <ExcelIcon size={18} />
      </div>
      <svg className="ml-auto" width="81" height="14" viewBox="0 0 81 14" fill="none" stroke="#ddd" strokeWidth="1.200">
        <circle cx="9" cy="3.500" r="2.300" />
        <path d="M6.500 8c2-2.500 5-1.500 5.500 1.500" />
        <circle cx="4" cy="7" r="2.200" />
        <path d="M.5 13c0-4.500 7-4.500 7 0" />
        <path d="M30.500 9.500l5-5 5 5" />
        <path d="M48.500 5h2.500l3-3v10l-3-3h-2.500zM56 4.500c1.500 1.500 1.500 3.500 0 5M58 3c2.500 2.500 2.500 5.500 0 8M60 1.500c3 3 3 8 0 11" />
        <path d="M70.500 3.500H80v6.500h-8.500V7M76 10v3M73 13h6M67.500 1.500h4v4h-4zM69 5.500V9c0 2 2 2 3 2" />
      </svg>
      <Label w={18} className="ml-[7px]">ENG</Label>
      <div className="ml-[9px] flex w-[43px] flex-col items-center leading-[14px]">
        <Label w={39}>10:03 AM</Label>
        <Label w={42}>9/16/2018</Label>
      </div>
      <svg className="ml-[14px] mr-[18px]" width="14" height="14" viewBox="0 0 14 14" fill="none" stroke="#ddd" strokeWidth="1.200">
        <path d="M.6 1h12.800v9.500H9.500L7 13l-2.500-2.500H.600z" />
      </svg>
    </footer>
  );
}

/* Activation notice, painted by the system over every window */
function Watermark() {
  return (
    <div className="absolute left-[1037px] top-[621px] text-[#b8b8b8]">
      <Label w={125} className="text-[16px] leading-5">Activate Windows</Label>
      <Label w={188} className="text-[12px] leading-4">Go to Settings to activate Windows.</Label>
    </div>
  );
}

export default function App() {
  return (
    <div className="relative h-[720px] w-[1280px] overflow-hidden bg-black font-['Open_Sans','Noto_Sans',sans-serif]">
      <div className="flex h-[690px] w-[1276px] flex-col bg-[#fdfdfd]">
        <TitleBar />
        <TabBar />
        <Ribbon />
        <FormulaBar />
        <Sheet />
        <SheetTabs />
        <StatusBar />
      </div>
      <Taskbar />
      <Watermark />
    </div>
  );
}
